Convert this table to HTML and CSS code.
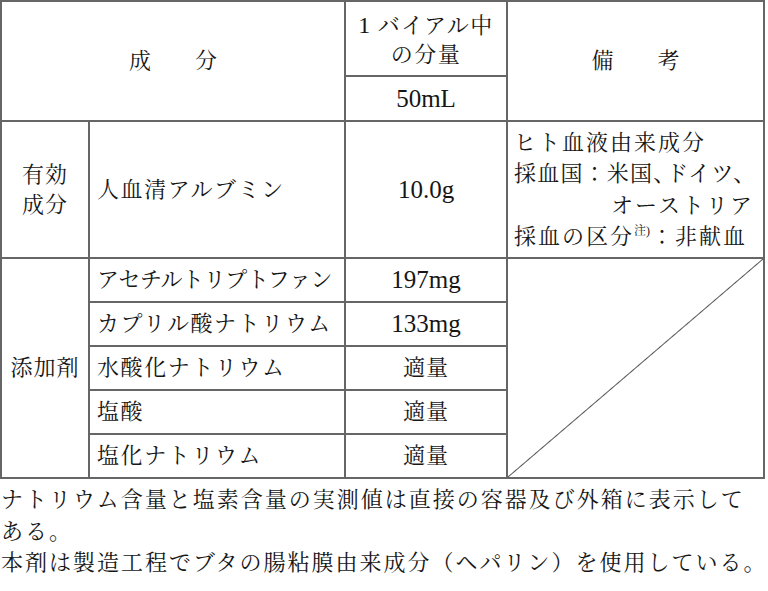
FILE: index.html
```html
<!DOCTYPE html>
<html lang="ja">
<head>
<meta charset="utf-8">
<title>成分表</title>
<link rel="stylesheet" href="styles.css">
</head>
<body>
<div class="sheet">
  <div class="grid">
    <div class="c h-name">成　　分</div>
    <div class="c h-qty"><span><span class="one">1</span>バイアル中<br>の分量</span></div>
    <div class="c h-note">備　　考</div>
    <div class="c num">50mL</div>

    <div class="c cat">有効<br>成分</div>
    <div class="c name">人血清アルブミン</div>
    <div class="c num">10.0g</div>
    <div class="c note">
      <div>ヒト血液由来成分</div>
      <div class="snug">採血国：米国<span class="half">、</span>ドイツ、</div>
      <div class="indent">オーストリア</div>
      <div>採血の区分<sup class="sup">注)</sup>：非献血</div>
    </div>

    <div class="c cat add">添加剤</div>
    <div class="c diag"></div>
    <div class="c name tight">アセチルトリプトファン</div>
    <div class="c num">197mg</div>
    <div class="c name">カプリル酸ナトリウム</div>
    <div class="c num">133mg</div>
    <div class="c name">水酸化ナトリウム</div>
    <div class="c qty">適量</div>
    <div class="c name">塩酸</div>
    <div class="c qty">適量</div>
    <div class="c name">塩化ナトリウム</div>
    <div class="c qty">適量</div>
  </div>
  <p class="notes">ナトリウム含量と塩素含量の実測値は直接の容器及び外箱に表示し<span class="last">て</span><br>ある。<br>本剤は製造工程でブタの腸粘膜由来成分（ヘパリン）を使用している<span class="last">。</span></p>
</div>
</body>
</html>
```

FILE: styles.css
```css
html, body {
  margin: 0;
  padding: 0;
  background: #fff;
}

body {
  width: 768px;
  height: 591px;
  overflow: hidden;
  color: #161616;
  font-family: "Liberation Serif", "Noto Serif CJK JP", "Noto Sans CJK JP", serif;
  font-size: 22px;
}

.sheet {
  padding: 0;
}

.grid {
  display: grid;
  width: 761px;
  grid-template-columns: 86px 254px 160px 255px;
  grid-template-rows: 73px 43px 135px 42px 42px 42px 42px 42px;
  gap: 2px;
  padding: 2px;
  background: #666;
}

.c {
  background: #fff;
  display: flex;
  align-items: center;
  justify-content: center;
  line-height: 30px;
  text-align: center;
}

.h-name {
  grid-column: 1 / 3;
  grid-row: 1 / 3;
}

.h-note {
  grid-column: 4;
  grid-row: 1 / 3;
}

.h-qty {
  letter-spacing: 1.5px;
  line-height: 29px;
  padding-top: 2px;
}

.one {
  font-size: 24px;
  margin-right: 6px;
}

.num {
  font-size: 25px;
}

.cat {
  grid-column: 1;
  letter-spacing: 1px;
}

.add {
  grid-row: 4 / 9;
}

.name {
  justify-content: flex-start;
  padding-left: 7px;
  letter-spacing: 1.6px;
  white-space: nowrap;
}

.tight {
  letter-spacing: -0.4px;
}

.qty {
  letter-spacing: 1px;
}

.note {
  flex-direction: column;
  align-items: stretch;
  justify-content: center;
  text-align: left;
  padding-left: 6px;
  line-height: 31.5px;
  letter-spacing: 2px;
  white-space: nowrap;
}

.snug {
  letter-spacing: 1.2px;
}

.indent {
  padding-left: 97px;
}

.half {
  letter-spacing: -11px;
  margin-right: 2px;
}

.sup {
  font-size: 12px;
  line-height: 0;
  vertical-align: 9px;
  letter-spacing: 0;
  margin-right: 1px;
}

.diag {
  grid-column: 4;
  grid-row: 4 / 9;
  background: linear-gradient(to bottom right, #fff calc(50% - 1px), #555 50%, #fff calc(50% + 1px));
}

.notes {
  margin: 5px 0 0 1px;
  line-height: 31.5px;
  letter-spacing: 2px;
  white-space: nowrap;
}

.last {
  letter-spacing: 0;
}
```
